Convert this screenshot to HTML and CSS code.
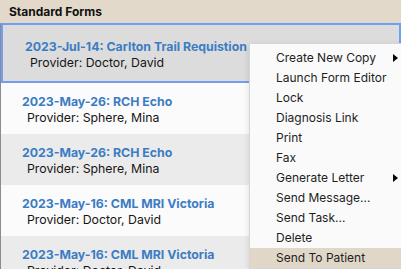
FILE: index.html
```html
<!DOCTYPE html>
<html lang="en">
<head>
    <meta charset="UTF-8">
    <title>Standard Forms</title>
    <link rel="stylesheet" href="styles.css">
</head>
<body>
    <main class="panel">
        <div class="panel-header">Standard Forms</div>
        <ul class="form-list">
            <li class="form-item selected">
                <div class="form-title">2023-Jul-14: Carlton Trail Requistion</div>
                <div class="form-provider">Provider: Doctor, David</div>
            </li>
            <li class="form-item">
                <div class="form-title">2023-May-26: RCH Echo</div>
                <div class="form-provider">Provider: Sphere, Mina</div>
            </li>
            <li class="form-item alt">
                <div class="form-title">2023-May-26: RCH Echo</div>
                <div class="form-provider">Provider: Sphere, Mina</div>
            </li>
            <li class="form-item">
                <div class="form-title">2023-May-16: CML MRI Victoria</div>
                <div class="form-provider">Provider: Doctor, David</div>
            </li>
            <li class="form-item alt">
                <div class="form-title">2023-May-16: CML MRI Victoria</div>
                <div class="form-provider">Provider: Doctor, David</div>
            </li>
        </ul>

        <!-- context menu -->
        <ul class="context-menu">
            <li class="has-sub">Create New Copy</li>
            <li>Launch Form Editor</li>
            <li>Lock</li>
            <li>Diagnosis Link</li>
            <li>Print</li>
            <li>Fax</li>
            <li class="has-sub">Generate Letter</li>
            <li>Send Message...</li>
            <li>Send Task...</li>
            <li>Delete</li>
            <li class="active">Send To Patient</li>
        </ul>
    </main>
</body>
</html>
```

FILE: styles.css
```css
body {
    margin: 0;
    font-family: 'Inter', 'Noto Sans', sans-serif;
    background-color: #ffffff;
    overflow: hidden;
}

.panel {
    position: relative;
    width: 401px;
    height: 269px;
    overflow: hidden;
}

.panel-header {
    height: 23px;
    line-height: 24px;
    padding-left: 9px;
    background-color: #e3d9cb;
    color: #111;
    font-size: 12px;
    font-weight: bold;
}

.form-list {
    list-style: none;
    margin: 0;
    padding: 0;
    border-left: 1px solid #8c8c8c;
}

.form-item {
    height: 51px;
    box-sizing: border-box;
    padding: 11px 0 0 21px;
    background-color: #fbfbfb;
}

.form-item.alt {
    background-color: #ebebeb;
}

.form-item.selected {
    height: 60px;
    padding: 14px 0 0 22px;
    background-color: #dcdcdc;
    border: 2px solid #6f9ff5;
}

.form-title {
    color: #3b7cc4;
    font-size: 12.3px;
    font-weight: bold;
    line-height: 16px;
}

.form-provider {
    color: #151515;
    font-size: 12.3px;
    line-height: 15px;
    padding-left: 5px;
}

.context-menu {
    position: absolute;
    left: 249px;
    top: 43px;
    width: 160px;
    list-style: none;
    margin: 0;
    padding: 4px 0 0 0;
    background-color: #fafafa;
    border: 1px solid #d6d6d6;
    box-shadow: 0 2px 6px rgba(0, 0, 0, 0.12);
}

.context-menu li {
    position: relative;
    height: 20px;
    line-height: 20px;
    padding-left: 26px;
    color: #1e1e1e;
    font-size: 12px;
}

.context-menu li.active {
    background-color: #e1d7c8;
}

.context-menu li.has-sub:after {
    content: "";
    position: absolute;
    left: 143px;
    top: 6px;
    border-top: 4px solid transparent;
    border-bottom: 4px solid transparent;
    border-left: 5px solid #000;
}
```
